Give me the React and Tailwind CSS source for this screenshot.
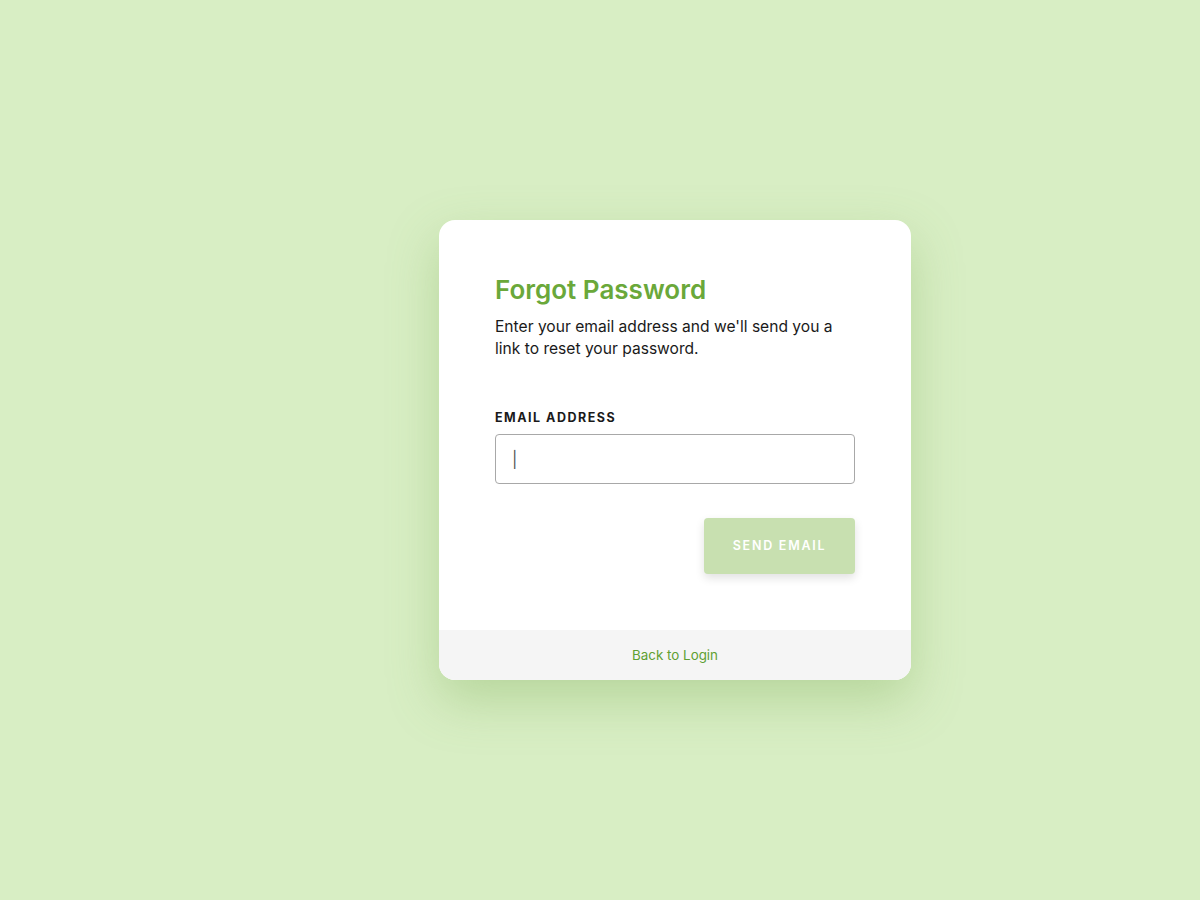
export default function App() {
  return (
    <div
      className="min-h-screen w-full bg-[#d8eec4] flex items-center justify-center pl-[150px]"
      style={{ fontFamily: "Inter, 'Noto Sans', sans-serif" }}
    >
      <div className="w-[472px] bg-white rounded-2xl overflow-hidden shadow-[0_20px_50px_rgba(120,170,80,0.35)]">
        <div className="px-14 pt-14 pb-14">
          <h1 className="text-[26px] leading-[28px] font-semibold text-[#6aa83a]">
            Forgot Password
          </h1>
          <p className="mt-3 text-[15.6px] leading-[22px] text-[#1a1a1a]">
            Enter your email address and we'll send you a link to reset your password.
          </p>
          <label className="block mt-[50px] text-[12.5px] leading-4 font-bold tracking-[0.12em] text-[#1a1a1a]">
            EMAIL ADDRESS
          </label>
          <input
            type="email"
            placeholder="|"
            className="mt-2 block w-full h-[50px] rounded border border-[#a8a8a8] px-4 text-base text-[#333] placeholder:text-[#555] outline-none"
          />
          <div className="mt-[34px] flex justify-end">
            <button className="w-[151px] h-14 rounded bg-[#c8e0b0] text-white text-[12.5px] font-semibold tracking-[0.14em] shadow-[0_4px_10px_rgba(0,0,0,0.12)]">
              SEND EMAIL
            </button>
          </div>
        </div>
        <div className="h-[50px] bg-[#f5f5f5] flex items-center justify-center">
          <a href="#" className="text-[13.4px] text-[#5fa032]">
            Back to Login
          </a>
        </div>
      </div>
    </div>
  );
}
